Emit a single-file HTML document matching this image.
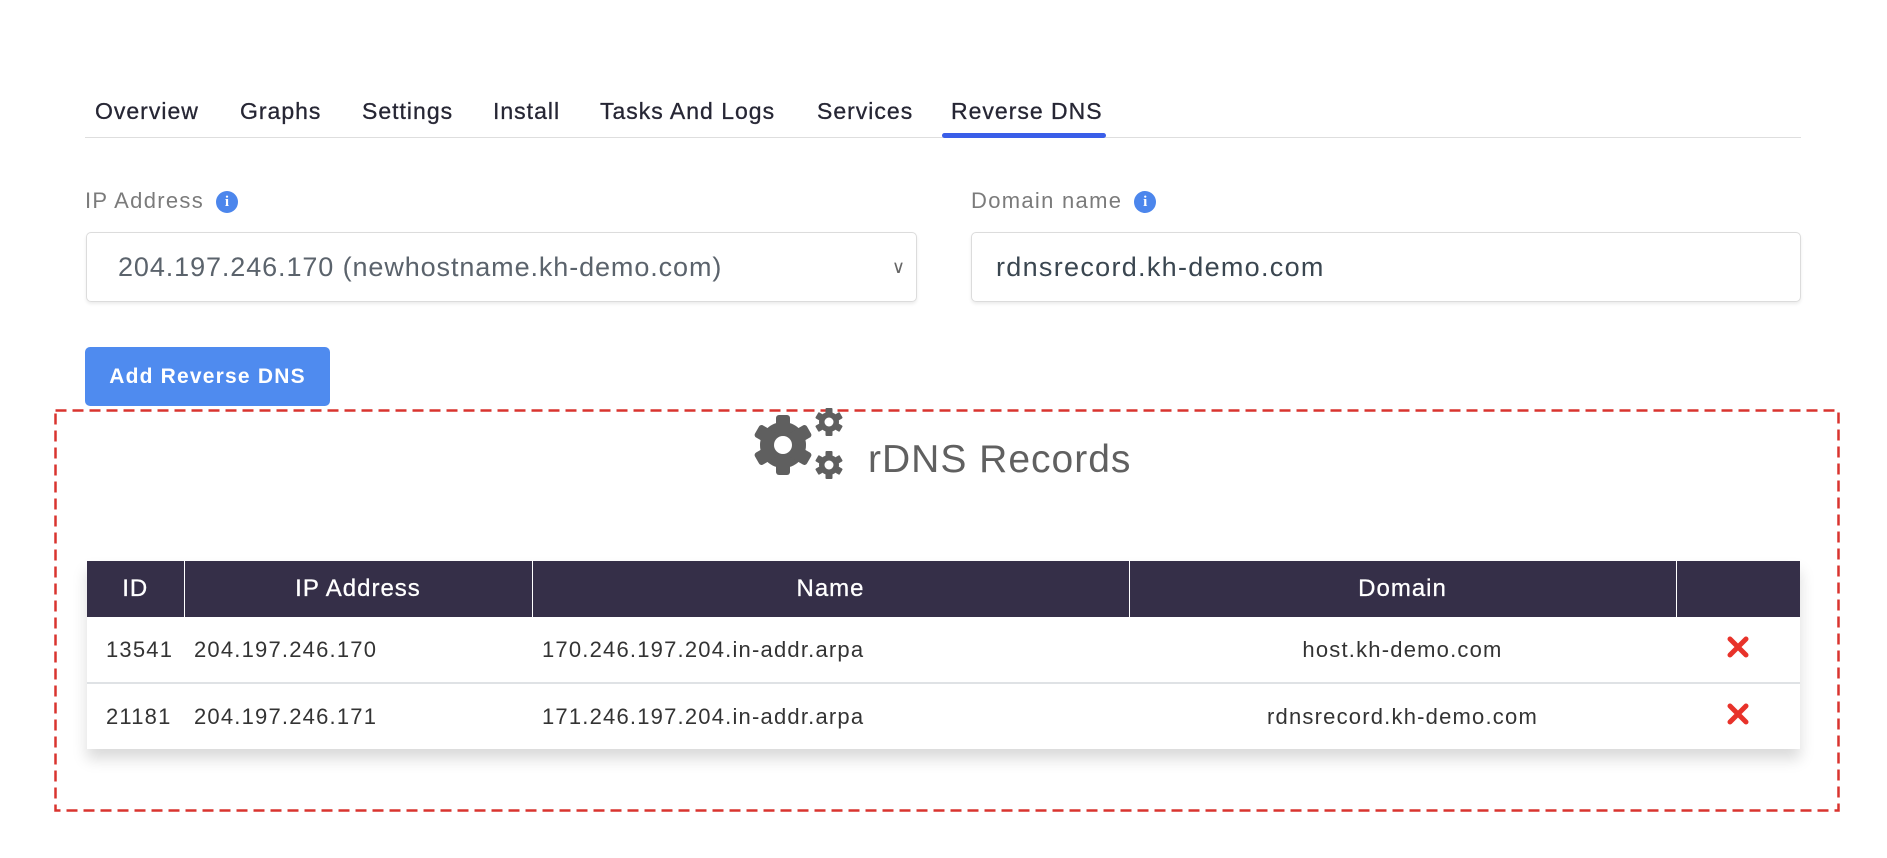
<!DOCTYPE html>
<html><head><meta charset="utf-8">
<style>
*{box-sizing:border-box;margin:0;padding:0}
body{width:1887px;height:858px;background:#fff;font-family:"Liberation Sans",sans-serif;position:relative;overflow:hidden;color:#2d2d3a}
.abs{position:absolute}
.tab{position:absolute;top:98px;font-size:23px;color:#262634;white-space:nowrap;letter-spacing:1px;-webkit-text-stroke:0.3px #262634}
.lbl{position:absolute;top:188px;font-size:22px;color:#7b7b7b;letter-spacing:1.3px}
.info{display:inline-block;width:22px;height:22px;border-radius:50%;background:#4c86ec;color:#fff;font-size:15px;font-weight:bold;text-align:center;line-height:22px;font-family:"Liberation Serif",serif;vertical-align:2px;margin-left:12px;letter-spacing:0}
.box{position:absolute;top:232px;height:70px;border:1px solid #dcdcdc;border-radius:5px;box-shadow:0 2px 3px rgba(0,0,0,.08);font-size:27px;padding-left:31px;line-height:68px;color:#5b636c;letter-spacing:0.9px}
table{position:absolute;left:87px;top:561px;width:1713px;border-collapse:collapse;box-shadow:0 10px 14px rgba(0,0,0,.15)}
th{background:#352f48;color:#fff;font-weight:normal;font-size:24px;height:56px;border-left:1px solid #fff;letter-spacing:1px;-webkit-text-stroke:0.3px #fff}
th:first-child{border-left:none}
td{height:66px;font-size:22px;color:#333;background:#fff;letter-spacing:1.2px}
tr.r1 td{border-bottom:2px solid #dfe2e5}
</style></head><body>
<div class="tab" style="left:95px">Overview</div>
<div class="tab" style="left:240px">Graphs</div>
<div class="tab" style="left:362px">Settings</div>
<div class="tab" style="left:493px">Install</div>
<div class="tab" style="left:600px">Tasks And Logs</div>
<div class="tab" style="left:817px">Services</div>
<div class="tab" style="left:951px">Reverse DNS</div>
<div class="abs" style="left:85px;top:137px;width:1716px;height:1px;background:#dedede"></div>
<div class="abs" style="left:942px;top:133px;width:164px;height:5px;background:#3a5ee8;border-radius:3px"></div>

<div class="lbl" style="left:85px">IP Address<span class="info">i</span></div>
<div class="lbl" style="left:971px">Domain name<span class="info">i</span></div>
<div class="box" style="left:86px;width:831px">204.197.246.170 (newhostname.kh-demo.com)<span style="position:absolute;right:10px;top:0;font-size:18px;color:#666">&#8744;</span></div>
<div class="box" style="left:971px;width:830px;padding-left:24px;color:#3a4650;letter-spacing:1.3px">rdnsrecord.kh-demo.com</div>

<div class="abs" style="left:85px;top:347px;width:245px;height:59px;background:#4f8bef;border-radius:5px;color:#fff;font-size:21px;font-weight:bold;text-align:center;line-height:59px;letter-spacing:1.2px">Add Reverse DNS</div>

<svg class="abs" style="left:54px;top:409px" width="1787" height="404"><rect x="1.5" y="1.5" width="1783" height="400" fill="none" stroke="#d9342f" stroke-width="2.5" stroke-dasharray="11 6"/></svg>

<svg class="abs" style="left:750px;top:408px" width="96" height="72" viewBox="0 0 96 72">
<g fill="#5f5f5f">
<circle cx="33" cy="37" r="23"/>
<g transform="translate(33 37)">
<rect x="-7" y="-30" width="14" height="60" rx="3"/>
<rect x="-7" y="-30" width="14" height="60" rx="3" transform="rotate(60)"/>
<rect x="-7" y="-30" width="14" height="60" rx="3" transform="rotate(120)"/>
</g>
<circle cx="79" cy="14" r="10"/>
<g transform="translate(79 14)"><rect x="-3.5" y="-14" width="7" height="28" rx="1"/><rect x="-3.5" y="-14" width="7" height="28" rx="1" transform="rotate(60)"/><rect x="-3.5" y="-14" width="7" height="28" rx="1" transform="rotate(120)"/></g>
<circle cx="79" cy="57" r="10"/>
<g transform="translate(79 57)"><rect x="-3.5" y="-14" width="7" height="28" rx="1"/><rect x="-3.5" y="-14" width="7" height="28" rx="1" transform="rotate(60)"/><rect x="-3.5" y="-14" width="7" height="28" rx="1" transform="rotate(120)"/></g>
</g>
<g fill="#fff"><circle cx="33" cy="37" r="9"/><circle cx="79" cy="14" r="4.5"/><circle cx="79" cy="57" r="4.5"/></g>
</svg>
<div class="abs" style="left:868px;top:438px;font-size:39px;color:#606060;letter-spacing:1px">rDNS Records</div>

<table>
<tr><th style="width:97px">ID</th><th style="width:348px">IP Address</th><th style="width:597px">Name</th><th style="width:547px">Domain</th><th></th></tr>
<tr class="r1"><td style="padding-left:19px">13541</td><td style="padding-left:10px">204.197.246.170</td><td style="padding-left:10px">170.246.197.204.in-addr.arpa</td><td style="text-align:center">host.kh-demo.com</td><td style="text-align:center"><svg width="24" height="24" viewBox="0 0 24 24"><path d="M4 4L20 20M20 4L4 20" stroke="#e8322a" stroke-width="5" stroke-linecap="round"/></svg></td></tr>
<tr><td style="padding-left:19px">21181</td><td style="padding-left:10px">204.197.246.171</td><td style="padding-left:10px">171.246.197.204.in-addr.arpa</td><td style="text-align:center">rdnsrecord.kh-demo.com</td><td style="text-align:center"><svg width="24" height="24" viewBox="0 0 24 24"><path d="M4 4L20 20M20 4L4 20" stroke="#e8322a" stroke-width="5" stroke-linecap="round"/></svg></td></tr>
</table>
</body></html>
